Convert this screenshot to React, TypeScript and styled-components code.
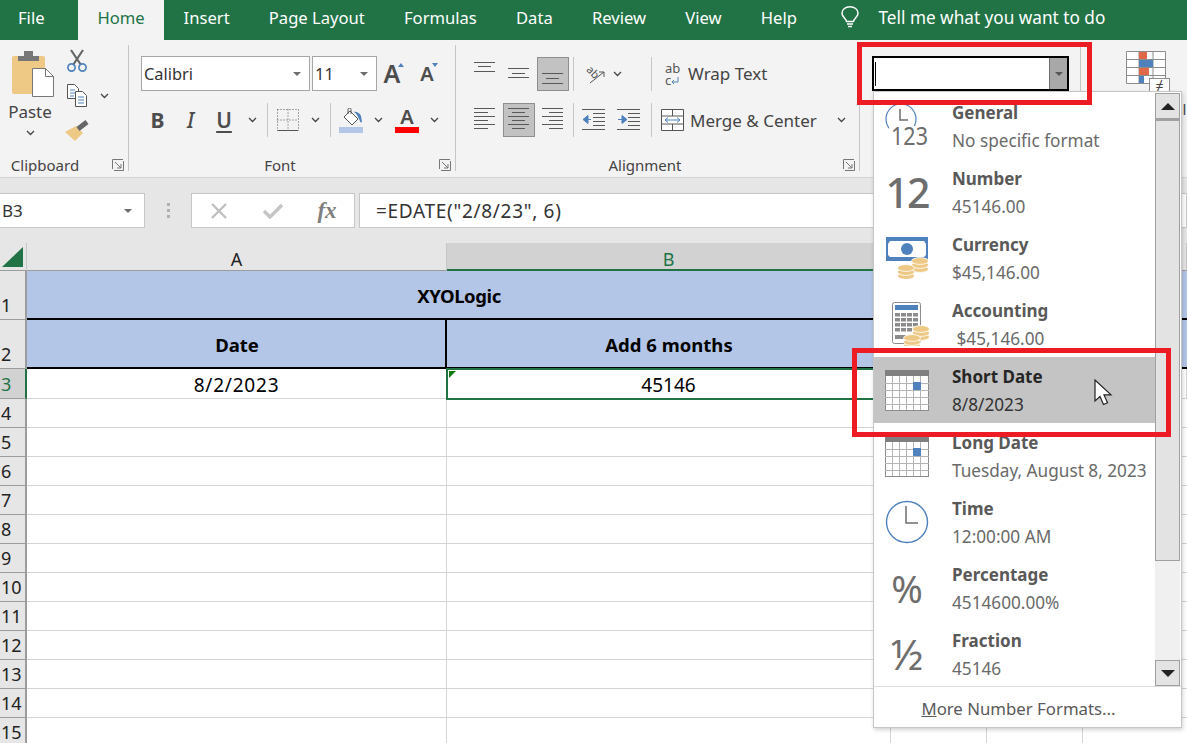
import React from 'react';
import styled, { createGlobalStyle } from 'styled-components';

const GREEN = '#217346';
const BLUE = '#4f81bd';
const CREAM = '#eec986';
const UI_FONT = '"Noto Sans", "Open Sans", sans-serif';

const GlobalStyle = createGlobalStyle`
  html, body {
    margin: 0;
    padding: 0;
    background: #fff;
    font-family: ${UI_FONT};
  }
  * { box-sizing: border-box; }
`;

const Page = styled.div`
  position: relative;
  width: 1187px;
  height: 743px;
  overflow: hidden;
  display: flex;
  flex-direction: column;
`;

/* tabs */
const TabBar = styled.div`
  display: flex;
  align-items: center;
  flex: 0 0 40px;
  background: ${GREEN};
  color: #fff;
  font-size: 16.6px;
`;

const Tab = styled.div<{ $active?: boolean; $w?: number }>`
  height: 40px;
  display: flex;
  align-items: center;
  justify-content: center;
  flex: ${(p) => (p.$w ? `0 0 ${p.$w}px` : '0 0 auto')};
  padding: ${(p) => (p.$w ? '0 0 6px' : '0 19.6px 6px')};
  background: ${(p) => (p.$active ? '#f3f3f3' : 'transparent')};
  color: ${(p) => (p.$active ? GREEN : '#fff')};
`;

const FileTab = styled(Tab)`
  justify-content: flex-start;
  padding-left: 18px;
`;

const TellMe = styled.div`
  display: flex;
  align-items: center;
  gap: 19px;
  margin-left: 23px;
  padding-bottom: 6px;
  font-size: 17.2px;
`;

/* ribbon */
const Ribbon = styled.div`
  display: flex;
  flex: 0 0 138px;
  background: #f3f3f3;
  border-bottom: 1px solid #d2d2d2;
  color: #444;
`;

const Group = styled.div<{ $w: number; $top?: number }>`
  position: relative;
  display: flex;
  flex-direction: column;
  flex: 0 0 ${(p) => p.$w}px;
  padding-top: ${(p) => p.$top ?? 16}px;
  &::after {
    content: '';
    position: absolute;
    top: 5px;
    bottom: 6px;
    right: 0;
    width: 1px;
    background: #c6c6c6;
  }
`;

const GroupBody = styled.div`
  display: flex;
  flex-direction: column;
  gap: 12px;
  flex: 1;
`;

const ToolRow = styled.div<{ $h?: number; $pad?: number }>`
  display: flex;
  align-items: center;
  height: ${(p) => p.$h ?? 34}px;
  padding-left: ${(p) => p.$pad ?? 0}px;
`;

const Tool = styled.div<{ $w: number; $on?: boolean; $ml?: number }>`
  position: relative;
  flex: 0 0 ${(p) => p.$w}px;
  height: 34px;
  margin-left: ${(p) => p.$ml ?? 0}px;
  display: flex;
  align-items: center;
  justify-content: center;
  background: ${(p) => (p.$on ? '#c2c2c2' : 'transparent')};
  border: ${(p) => (p.$on ? '1px solid #8e8e8e' : '0')};
`;

const RowSep = styled.div<{ $w: number; $ml?: number }>`
  flex: 0 0 ${(p) => p.$w}px;
  height: 34px;
  margin-left: ${(p) => p.$ml ?? 0}px;
  display: flex;
  justify-content: center;
  &::before {
    content: '';
    width: 1px;
    background: #c6c6c6;
  }
`;

const Footer = styled.div`
  display: flex;
  align-items: center;
  height: 20px;
  padding-right: 5px;
  margin-bottom: 2px;
`;

const GroupLabel = styled.div<{ $w: number }>`
  width: ${(p) => p.$w}px;
  text-align: center;
  font-size: 15px;
  line-height: 20px;
  color: #444;
`;

const LauncherBox = styled.div`
  margin-left: auto;
  width: 12px;
  height: 12px;
  display: flex;
`;

const ClipRow = styled.div`
  display: flex;
  flex: 1;
`;

const PasteColumn = styled.div`
  flex: 0 0 60px;
  display: flex;
  flex-direction: column;
  align-items: center;
  padding-top: 8px;
`;

const PasteIcon = styled.svg`
  margin-left: 6px;
`;

const PasteLabel = styled.div`
  font-size: 17px;
  line-height: 22px;
  margin: 4px 0 7px;
`;

const SmallColumn = styled.div`
  display: flex;
  flex-direction: column;
`;

const SmallRow = styled.div`
  display: flex;
  align-items: center;
  height: 35px;
`;

const SmallTool = styled.div<{ $w: number }>`
  flex: 0 0 ${(p) => p.$w}px;
  display: flex;
  align-items: center;
  justify-content: center;
`;

const Combo = styled.div<{ $w: number; $ml?: number }>`
  flex: 0 0 ${(p) => p.$w}px;
  height: 35px;
  margin-left: ${(p) => p.$ml ?? 0}px;
  display: flex;
  align-items: center;
  justify-content: space-between;
  padding: 0 8px 0 2px;
  background: #fff;
  border: 1px solid #a6a6a6;
  font-size: 16.4px;
  color: #333;
`;

const Arrow = styled.span<{ $color?: string }>`
  width: 0;
  height: 0;
  border-left: 4px solid transparent;
  border-right: 4px solid transparent;
  border-top: 4px solid ${(p) => p.$color ?? '#6d6d6d'};
`;

const FontLetter = styled.span<{ $size: number; $weight?: number; $italic?: boolean; $under?: boolean }>`
  font-size: ${(p) => p.$size}px;
  font-weight: ${(p) => p.$weight ?? 700};
  font-style: ${(p) => (p.$italic ? 'italic' : 'normal')};
  text-decoration: ${(p) => (p.$under ? 'underline' : 'none')};
  text-underline-offset: 3px;
  color: #4d4d4d;
  line-height: 1;
`;

const SizeCaret = styled.span<{ $left: number }>`
  position: absolute;
  top: 6px;
  left: ${(p) => p.$left}px;
  width: 0;
  height: 0;
  border-left: 3.5px solid transparent;
  border-right: 3.5px solid transparent;
  border-bottom: 4px solid ${BLUE};
`;

const SizeCaretDown = styled(SizeCaret)`
  border-bottom: 0;
  border-top: 4px solid ${BLUE};
`;

const ColorLetter = styled.div`
  display: flex;
  flex-direction: column;
  align-items: center;
  width: 24px;
  line-height: 1;
`;

const ColorBar = styled.div<{ $c: string }>`
  width: 24px;
  height: 6px;
  background: ${(p) => p.$c};
`;

const ActionButton = styled.div<{ $ml: number }>`
  display: flex;
  align-items: center;
  gap: 6px;
  margin-left: ${(p) => p.$ml}px;
  font-size: 17px;
  color: #444;
`;

const WrapGlyph = styled.div`
  display: flex;
  flex-direction: column;
  width: 17px;
  font-size: 13px;
  line-height: 12px;
  color: #555;
`;

const MergeChevron = styled.span`
  display: flex;
  margin-left: 14px;
`;

const NumberBox = styled.div`
  width: 197px;
  height: 35px;
  margin-left: 12px;
  display: flex;
  background: #fff;
  border: 2px solid #000;
`;

const NumberInput = styled.div`
  flex: 1;
  display: flex;
  align-items: center;
  padding-left: 1px;
  &::before {
    content: '';
    width: 1px;
    height: 24px;
    background: #000;
  }
`;

const NumberDrop = styled.div`
  flex: 0 0 18px;
  display: flex;
  align-items: center;
  justify-content: center;
  background: #a8a8a8;
  border-left: 1px solid #6d6d6d;
`;

const StylesColumn = styled.div`
  display: flex;
  flex-direction: column;
  align-items: center;
  width: 100px;
  margin-left: 24px;
  padding-top: 11px;
`;

const StylesIconBox = styled.div`
  position: relative;
  width: 40px;
  height: 42px;
`;

const NotEqual = styled.div`
  position: absolute;
  left: 23px;
  top: 27px;
  width: 21px;
  height: 16px;
  background: #fff;
  border: 1px solid #8c8c8c;
  font-size: 14px;
  line-height: 14px;
  text-align: center;
  color: #444;
`;

const StylesLabel = styled.div`
  font-size: 15px;
  line-height: 18px;
  margin-top: 7px;
`;

/* formula bar */
const FormulaBand = styled.div`
  display: flex;
  align-items: flex-start;
  flex: 0 0 65px;
  padding-top: 15px;
  background: #e6e6e6;
`;

const NameBox = styled.div`
  flex: 0 0 146px;
  height: 35px;
  margin-left: -1px;
  display: flex;
  align-items: center;
  justify-content: space-between;
  padding: 0 12px 0 2px;
  background: #fff;
  border: 1px solid #c6c6c6;
  font-size: 17px;
  color: #333;
`;

const GripDots = styled.div`
  flex: 0 0 46px;
  height: 35px;
  display: flex;
  flex-direction: column;
  align-items: center;
  justify-content: center;
  gap: 3px;
`;

const GripDot = styled.span`
  width: 3px;
  height: 3px;
  background: #b0b0b0;
`;

const FormulaTools = styled.div`
  flex: 0 0 164px;
  height: 35px;
  display: flex;
  align-items: center;
  background: #fff;
  border: 1px solid #c6c6c6;
`;

const FormulaTool = styled.div`
  flex: 0 0 54px;
  display: flex;
  justify-content: center;
`;

const FxLabel = styled.span`
  font-family: "Liberation Serif", serif;
  font-style: italic;
  font-weight: 700;
  font-size: 23px;
  color: #7f7f7f;
`;

const FormulaInput = styled.div`
  flex: 1;
  height: 35px;
  margin-left: 4px;
  padding-left: 16px;
  display: flex;
  align-items: center;
  background: #fff;
  border: 1px solid #c6c6c6;
  font-size: 19px;
  letter-spacing: 0.7px;
  color: #333;
`;

/* sheet */
const Sheet = styled.div`
  flex: 1;
  display: grid;
  grid-template-columns: 27px 420px 444px 96px 96px 104px;
  grid-template-rows: 28px 49px 49px 30px repeat(12, 29px);
  background: #fff;
`;

const Corner = styled.div`
  background: #e6e6e6;
  border-right: 1px solid #c6c6c6;
  border-bottom: 1px solid #9c9c9c;
  display: flex;
  align-items: flex-end;
  padding: 0 0 3px 2px;
`;

const ColHead = styled.div<{ $sel?: boolean }>`
  display: flex;
  align-items: center;
  justify-content: center;
  padding-top: 5px;
  background: ${(p) => (p.$sel ? '#d2d2d2' : '#e6e6e6')};
  border-right: 1px solid #c6c6c6;
  border-bottom: ${(p) => (p.$sel ? `2px solid ${GREEN}` : '1px solid #9c9c9c')};
  color: ${(p) => (p.$sel ? GREEN : '#222')};
  font-size: 18px;
`;

const RowHead = styled.div<{ $sel?: boolean }>`
  display: flex;
  align-items: flex-end;
  padding: 0 0 3px 1px;
  background: ${(p) => (p.$sel ? '#d2d2d2' : '#e6e6e6')};
  border-right: ${(p) => (p.$sel ? `2px solid ${GREEN}` : '2px solid #9c9c9c')};
  border-bottom: 1px solid #9c9c9c;
  color: ${(p) => (p.$sel ? GREEN : '#222')};
  font-size: 18px;
  line-height: 22px;
`;

const Cell = styled.div<{
  $blue?: boolean;
  $span?: number;
  $bold?: boolean;
  $heavy?: boolean;
  $heavyLeft?: boolean;
  $noRight?: boolean;
  $track?: number;
}>`
  position: relative;
  display: flex;
  align-items: center;
  justify-content: center;
  padding-top: 2px;
  grid-column: span ${(p) => p.$span ?? 1};
  background: ${(p) => (p.$blue ? '#b4c6e7' : '#fff')};
  border-right: ${(p) => (p.$noRight || p.$blue ? '0' : '1px solid #d4d4d4')};
  border-bottom: ${(p) => (p.$heavy ? '2px solid #000' : '1px solid #d4d4d4')};
  box-shadow: ${(p) => (p.$heavyLeft ? '-2px 0 0 #000' : 'none')};
  font-weight: ${(p) => (p.$bold ? 700 : 400)};
  font-size: ${(p) => (p.$bold ? 18.5 : 19)}px;
  letter-spacing: ${(p) => p.$track ?? 0}px;
  color: #000;
`;

const SelectedCell = styled(Cell)`
  z-index: 1;
  outline: 2px solid ${GREEN};
  outline-offset: -1px;
  &::before {
    content: '';
    position: absolute;
    left: 2px;
    top: 2px;
    border-top: 7px solid #107c10;
    border-right: 7px solid transparent;
  }
`;

/* number format menu */
const FormatMenu = styled.div`
  position: absolute;
  left: 873px;
  top: 91px;
  width: 309px;
  height: 637px;
  z-index: 5;
  display: flex;
  flex-direction: column;
  background: #fff;
  border: 1px solid #c6c6c6;
  box-shadow: 1px 2px 4px rgba(0, 0, 0, 0.18);
`;

const MenuBody = styled.div`
  display: flex;
  height: 595px;
  padding-top: 1px;
  border-bottom: 1px solid #dcdcdc;
`;

const MenuList = styled.div`
  flex: 0 0 281px;
`;

const MenuItem = styled.div<{ $hover?: boolean }>`
  display: flex;
  align-items: center;
  height: 66px;
  background: ${(p) => (p.$hover ? '#c4c4c4' : 'transparent')};
`;

const ItemIcon = styled.div`
  flex: 0 0 78px;
  padding-left: 11px;
  display: flex;
  align-items: center;
`;

const BigText = styled.span<{ $size: number; $space?: number; $weight?: number }>`
  font-size: ${(p) => p.$size}px;
  letter-spacing: ${(p) => p.$space ?? 0}px;
  font-weight: ${(p) => p.$weight ?? 400};
  line-height: 1;
  color: #6e6e6e;
  width: 44px;
  text-align: center;
`;

const ItemText = styled.div`
  display: flex;
  flex-direction: column;
  gap: 5px;
`;

const ItemTitle = styled.div<{ $hover?: boolean }>`
  font-size: 17px;
  line-height: 23px;
  font-weight: 700;
  color: ${(p) => (p.$hover ? '#262626' : '#595959')};
`;

const ItemDetail = styled.div<{ $hover?: boolean }>`
  font-size: 17.2px;
  line-height: 23px;
  white-space: pre;
  color: ${(p) => (p.$hover ? '#333' : '#6a6a6a')};
`;

const ScrollBar = styled.div`
  flex: 0 0 25px;
  display: flex;
  flex-direction: column;
`;

const ScrollButton = styled.div`
  flex: 0 0 26px;
  display: flex;
  align-items: center;
  justify-content: center;
  background: #e3e3e3;
  border: 1px solid #a0a0a0;
`;

const ScrollUp = styled.span`
  width: 0;
  height: 0;
  border-left: 7px solid transparent;
  border-right: 7px solid transparent;
  border-bottom: 7px solid #222;
`;

const ScrollDown = styled.span`
  width: 0;
  height: 0;
  border-left: 7px solid transparent;
  border-right: 7px solid transparent;
  border-top: 7px solid #222;
`;

const ScrollThumb = styled.div`
  flex: 0 0 442px;
  background: #e3e3e3;
  border: 1px solid #a0a0a0;
  border-top: 2px solid #a0a0a0;
`;

const ScrollTrack = styled.div`
  flex: 1;
  background: #f0f0f0;
`;

const MoreFormats = styled.div`
  flex: 1;
  display: flex;
  align-items: center;
  justify-content: center;
  padding: 2px 18px 0 0;
  font-size: 16.8px;
  color: #595959;
`;

const Underlined = styled.span`
  text-decoration: underline;
`;

/* annotations on top of the screenshot */
const RedBox = styled.div<{ $x: number; $y: number; $w: number; $h: number }>`
  position: absolute;
  left: ${(p) => p.$x}px;
  top: ${(p) => p.$y}px;
  width: ${(p) => p.$w}px;
  height: ${(p) => p.$h}px;
  border: 5px solid #ed1c24;
  z-index: 6;
`;

const Pointer = styled.svg`
  position: absolute;
  left: 1094px;
  top: 379px;
  z-index: 7;
`;

const Chevron = () => (
  <svg width="9" height="6" viewBox="0 0 9 6">
    <polyline points="1,1 4.5,4.5 8,1" fill="none" stroke="#444" strokeWidth="1.3" />
  </svg>
);

const Launcher = () => (
  <LauncherBox>
    <svg width="12" height="12" viewBox="0 0 12 12">
      <path d="M.5 10V.5H11M2 11.5h9.5V2M3 3l6 6M9 5v4H5" fill="none" stroke="#777" strokeWidth="1" />
    </svg>
  </LauncherBox>
);

type Line = [number, number, number];

const LineIcon = ({ lines }: { lines: Line[] }) => (
  <svg width="22" height="34" viewBox="0 0 22 34">
    {lines.map(([x, w, y]) => (
      <rect key={`${x}-${y}`} x={x} y={y} width={w} height="1" fill="#595959" />
    ))}
  </svg>
);

const stack = (xs: [number, number][]): Line[] => xs.map(([x, w], i) => [x, w, 5 + i * 4]);

const Bulb = () => (
  <svg width="20" height="22" viewBox="0 0 20 22">
    <path
      d="M6.5 15.5C6 12.5 2 11 2 7.2 2 3.2 5.6.8 10 .8s8 2.4 8 6.4c0 3.8-4 5.3-4.5 8.3zM7 18h6M8 20.5h4"
      fill="none"
      stroke="#fff"
      strokeWidth="1.5"
    />
  </svg>
);

const ScissorsIcon = () => (
  <svg width="22" height="24" viewBox="0 0 22 24">
    <path d="M5 1l10 15M17 1L7 16" stroke="#666" strokeWidth="2.2" fill="none" />
    <circle cx="5.5" cy="18.5" r="3.6" fill="none" stroke={BLUE} strokeWidth="1.7" />
    <circle cx="16.5" cy="18.5" r="3.6" fill="none" stroke={BLUE} strokeWidth="1.7" />
  </svg>
);

const CopyIcon = () => (
  <svg width="21" height="23" viewBox="0 0 21 23">
    <path d="M.5.5h7l4 4v10H.5z" fill="#fff" stroke="#555" />
    <path d="M8.5 7.5h7l4 4v11h-11z" fill="#fff" stroke="#555" />
    <path d="M3 6h5M3 9h5M3 12h4" stroke={BLUE} />
    <path d="M11 13h6M11 16h6M11 19h6" stroke={BLUE} />
  </svg>
);

const PainterIcon = () => (
  <svg width="24" height="21" viewBox="0 0 24 21">
    <path d="M0 12l11-6 7 7-8 8z" fill={CREAM} />
    <path d="M13 9l9-7" stroke="#666" strokeWidth="5" />
  </svg>
);

const BordersIcon = () => (
  <svg width="22" height="22" viewBox="0 0 22 22">
    <path
      d="M.5.5h21M.5 11h21M.5 21.5h21M.5.5v21M11 .5v21M21.5.5v21"
      stroke="#555"
      strokeDasharray="1 2"
      fill="none"
    />
    <path d="M.5 21.5h21" stroke="#555" />
  </svg>
);

const BucketIcon = () => (
  <svg width="24" height="19" viewBox="0 0 24 19">
    <path d="M11 3l8 8-6 6-8-8z" fill="#fff" stroke="#555" />
    <path d="M9 6V1.5a1.5 1.5 0 0 1 3 0V6" fill="none" stroke="#555" />
    <path d="M19 9c-1-3-3-5-5-5 3-1 7 1 8 4l1 6c-1 1-2 0-2-1z" fill={BLUE} />
  </svg>
);

const OrientationIcon = () => (
  <svg width="22" height="24" viewBox="0 0 22 24">
    <text x="3" y="13" fontSize="11" fill="#555" fontFamily={UI_FONT} transform="rotate(45 8 9)">
      ab
    </text>
    <path d="M6 21L20 10M15 10h5v5" fill="none" stroke="#555" />
  </svg>
);

const ReturnArrow = () => (
  <svg width="8" height="8" viewBox="0 0 8 8">
    <path d="M7 0v5H1M3 3L1 5l2 2" fill="none" stroke={BLUE} />
  </svg>
);

const MergeIcon = () => (
  <svg width="23" height="22" viewBox="0 0 23 22">
    <path d="M.5.5h22v21H.5zM.5 7h22M.5 15h22M11.5.5V7M11.5 15v6.5" fill="#fff" stroke="#555" />
    <path d="M4 11h15M7 8.5L4 11l3 2.5M16 8.5l3 2.5-3 2.5" fill="none" stroke={BLUE} />
  </svg>
);

const IndentIcon = ({ flip }: { flip?: boolean }) => (
  <svg width="23" height="22" viewBox="0 0 23 22">
    <path d="M0 .5h23M11 4.5h12M11 8.5h12M11 12.5h12M11 16.5h12M0 20.5h23" stroke="#595959" />
    {flip ? (
      <path d="M1 10.5h6M5 6.5l5 4-5 4z" fill={BLUE} stroke={BLUE} />
    ) : (
      <path d="M9 10.5H3M6 6.5l-5 4 5 4z" fill={BLUE} stroke={BLUE} />
    )}
  </svg>
);

const CondFormatIcon = () => (
  <svg width="40" height="33" viewBox="0 0 40 33">
    <path d="M.5.5h39v32H.5zM.5 8.5h39M.5 16.5h39M.5 24.5h39M13 .5v32M27 .5v32" fill="#fff" stroke="#8c8c8c" />
    <rect x="13" y="1" width="8" height="7" fill="#e0694a" />
    <rect x="13" y="9" width="14" height="7" fill={BLUE} />
    <rect x="13" y="17" width="10" height="7" fill="#e0694a" />
    <rect x="13" y="25" width="5" height="7" fill={BLUE} />
  </svg>
);

const CrossIcon = () => (
  <svg width="16" height="16" viewBox="0 0 16 16">
    <path d="M1 1l14 14M15 1L1 15" stroke="#c0c0c0" strokeWidth="2.4" />
  </svg>
);

const CheckIcon = () => (
  <svg width="20" height="16" viewBox="0 0 20 16">
    <path d="M1 8l6 6L19 2" fill="none" stroke="#c4c4c4" strokeWidth="3.4" />
  </svg>
);

const SelectAll = () => (
  <svg width="21" height="20" viewBox="0 0 21 20">
    <path d="M21 0v20H0z" fill={GREEN} />
  </svg>
);

const GeneralIcon = () => (
  <svg width="44" height="44" viewBox="0 0 44 44">
    <circle cx="16" cy="15" r="15" fill="none" stroke={BLUE} strokeWidth="1.2" />
    <path d="M15 5v11h8" fill="none" stroke="#6e6e6e" strokeWidth="1.5" />
    <rect x="4" y="22" width="40" height="22" fill="#fff" />
    <text x="6" y="41" fontSize="26" fill="#6e6e6e" fontFamily={UI_FONT} textLength="37" lengthAdjust="spacingAndGlyphs">
      123
    </text>
  </svg>
);

const Coins = ({ x, y }: { x: number; y: number }) => (
  <g fill={CREAM} stroke="#fff" strokeWidth="0.8">
    {[8, 4, 0].map((d) => (
      <ellipse key={d} cx={x} cy={y + d} rx="8.5" ry="3.4" />
    ))}
  </g>
);

const CurrencyIcon = () => (
  <svg width="44" height="42" viewBox="0 0 44 42">
    <path d="M1 0h42v24H1z" fill={BLUE} />
    <path d="M5 4h34l2 3v11l-2 2H5l-2-2V7z" fill="#fff" />
    <circle cx="22" cy="12" r="6" fill={BLUE} />
    <Coins x={35} y={24} />
    <Coins x={21} y={31} />
  </svg>
);

const AccountingIcon = () => (
  <svg width="44" height="44" viewBox="0 0 44 44">
    <rect x="7.5" y="0.5" width="28" height="41" rx="2" fill="#fff" stroke="#8c8c8c" />
    <rect x="10" y="3" width="23" height="5" fill={BLUE} />
    {[11, 16, 21, 26].flatMap((y) =>
      [10, 16, 22, 28].map((x) => <rect key={`${x}-${y}`} x={x} y={y} width="5" height="3.5" fill="#8c8c8c" />),
    )}
    <rect x="10" y="33" width="11" height="4" fill="#8c8c8c" />
    <Coins x={36} y={27} />
    <Coins x={27} y={36} />
  </svg>
);

const CalendarIcon = () => (
  <svg width="44" height="41" viewBox="0 0 44 41">
    <rect x="0.5" y="0.5" width="43" height="40" fill="#fff" stroke="#8c8c8c" />
    <rect x="0" y="0" width="44" height="6" fill="#7f7f7f" />
    <path d="M7.5 6v34M14.5 6v34M21.5 6v34M28.5 6v34M35.5 6v34M0 13.5h44M0 20.5h44M0 27.5h44M0 34.5h44" stroke="#b4b4b4" />
    <rect x="28" y="12" width="8" height="8" fill={BLUE} />
  </svg>
);

const ClockIcon = () => (
  <svg width="44" height="44" viewBox="0 0 44 44">
    <circle cx="22" cy="22" r="20.5" fill="none" stroke={BLUE} strokeWidth="1.4" />
    <path d="M21 6v17h12" fill="none" stroke="#6e6e6e" strokeWidth="1.5" />
  </svg>
);

const formats = [
  { title: 'General', detail: 'No specific format', icon: <GeneralIcon /> },
  { title: 'Number', detail: '45146.00', icon: <BigText $size={41} $space={-2} $weight={500}>12</BigText> },
  { title: 'Currency', detail: '$45,146.00', icon: <CurrencyIcon /> },
  { title: 'Accounting', detail: ' $45,146.00', icon: <AccountingIcon /> },
  { title: 'Short Date', detail: '8/8/2023', icon: <CalendarIcon />, hover: true },
  { title: 'Long Date', detail: 'Tuesday, August 8, 2023', icon: <CalendarIcon /> },
  { title: 'Time', detail: '12:00:00 AM', icon: <ClockIcon /> },
  { title: 'Percentage', detail: '4514600.00%', icon: <BigText $size={38}>%</BigText> },
  { title: 'Fraction', detail: '45146', icon: <BigText $size={42}>½</BigText> },
];

const tabs = ['Insert', 'Page Layout', 'Formulas', 'Data', 'Review', 'View', 'Help'];
const blankRows = [4, 5, 6, 7, 8, 9, 10, 11, 12, 13, 14, 15];

const App: React.FC = () => {
  return (
    <Page>
      <GlobalStyle />
      <TabBar>
        <FileTab $w={78}>File</FileTab>
        <Tab $w={86} $active>Home</Tab>
        {tabs.map((t) => (
          <Tab key={t}>{t}</Tab>
        ))}
        <TellMe>
          <Bulb />
          <span>Tell me what you want to do</span>
        </TellMe>
      </TabBar>

      <Ribbon>
        <Group $w={129} $top={3}>
          <ClipRow>
            <PasteColumn>
              <PasteIcon width="42" height="46" viewBox="0 0 42 46">
                <rect x="0" y="5" width="33" height="38" rx="2" fill={CREAM} />
                <path d="M6 5h6V0h9v5h6v5H6z" fill="#777" />
                <path d="M20.5 17.5h13l8 8v20h-21z" fill="#fff" stroke="#777" />
                <path d="M33.5 17.5v8h8" fill="none" stroke="#777" />
              </PasteIcon>
              <PasteLabel>Paste</PasteLabel>
              <Chevron />
            </PasteColumn>
            <SmallColumn>
              <SmallRow>
                <SmallTool $w={34}><ScissorsIcon /></SmallTool>
              </SmallRow>
              <SmallRow>
                <SmallTool $w={34}><CopyIcon /></SmallTool>
                <SmallTool $w={20}><Chevron /></SmallTool>
              </SmallRow>
              <SmallRow>
                <SmallTool $w={34}><PainterIcon /></SmallTool>
              </SmallRow>
            </SmallColumn>
          </ClipRow>
          <Footer>
            <GroupLabel $w={90}>Clipboard</GroupLabel>
            <Launcher />
          </Footer>
        </Group>

        <Group $w={327}>
          <GroupBody>
            <ToolRow $h={35} $pad={12}>
              <Combo $w={169}>Calibri<Arrow /></Combo>
              <Combo $w={65} $ml={2}>11<Arrow /></Combo>
              <Tool $w={26} $ml={2}>
                <FontLetter $size={25} $weight={600}>A</FontLetter>
                <SizeCaret $left={19} />
              </Tool>
              <Tool $w={34} $ml={5}>
                <FontLetter $size={20} $weight={600}>A</FontLetter>
                <SizeCaretDown $left={22} />
              </Tool>
            </ToolRow>
            <ToolRow $pad={12}>
              <Tool $w={33}><FontLetter $size={21}>B</FontLetter></Tool>
              <Tool $w={33}><FontLetter $size={21} $italic $weight={500}>I</FontLetter></Tool>
              <Tool $w={34}><FontLetter $size={21} $under $weight={600}>U</FontLetter></Tool>
              <Tool $w={22}><Chevron /></Tool>
              <RowSep $w={8} />
              <Tool $w={33}><BordersIcon /></Tool>
              <Tool $w={22}><Chevron /></Tool>
              <RowSep $w={8} />
              <Tool $w={33}>
                <ColorLetter>
                  <BucketIcon />
                  <ColorBar $c="#b4c6e7" />
                </ColorLetter>
              </Tool>
              <Tool $w={22}><Chevron /></Tool>
              <Tool $w={36}>
                <ColorLetter>
                  <FontLetter $size={20} $weight={600}>A</FontLetter>
                  <ColorBar $c="#ff0000" />
                </ColorLetter>
              </Tool>
              <Tool $w={18}><Chevron /></Tool>
            </ToolRow>
          </GroupBody>
          <Footer>
            <GroupLabel $w={302}>Font</GroupLabel>
            <Launcher />
          </Footer>
        </Group>

        <Group $w={404}>
          <GroupBody>
            <ToolRow $h={35} $pad={12}>
              <Tool $w={33}><LineIcon lines={[[0, 21, 5], [4, 13, 9], [0, 21, 14]]} /></Tool>
              <Tool $w={34}><LineIcon lines={[[1, 21, 11], [5, 13, 16], [1, 21, 20]]} /></Tool>
              <Tool $w={32} $ml={2} $on><LineIcon lines={[[0, 21, 16], [4, 13, 21], [0, 21, 26]]} /></Tool>
              <RowSep $w={9} />
              <Tool $w={33}><OrientationIcon /></Tool>
              <Tool $w={12}><Chevron /></Tool>
              <RowSep $w={8} $ml={24} />
              <ActionButton $ml={10}>
                <WrapGlyph>
                  <span>ab</span>
                  <span>c<ReturnArrow /></span>
                </WrapGlyph>
                <span>Wrap Text</span>
              </ActionButton>
            </ToolRow>
            <ToolRow $pad={12}>
              <Tool $w={33}><LineIcon lines={stack([[0, 21], [0, 14], [0, 21], [0, 14], [0, 21], [0, 14]])} /></Tool>
              <Tool $w={32} $ml={2} $on><LineIcon lines={stack([[0, 21], [4, 13], [0, 21], [4, 13], [0, 21], [4, 13]])} /></Tool>
              <Tool $w={32} $ml={2}><LineIcon lines={stack([[0, 21], [7, 14], [0, 21], [7, 14], [0, 21], [7, 14]])} /></Tool>
              <RowSep $w={9} />
              <Tool $w={31}><IndentIcon /></Tool>
              <Tool $w={38}><IndentIcon flip /></Tool>
              <RowSep $w={8} />
              <ActionButton $ml={6}>
                <MergeIcon />
                <span>Merge &amp; Center</span>
                <MergeChevron><Chevron /></MergeChevron>
              </ActionButton>
            </ToolRow>
          </GroupBody>
          <Footer>
            <GroupLabel $w={378}>Alignment</GroupLabel>
            <Launcher />
          </Footer>
        </Group>

        <Group $w={221}>
          <NumberBox>
            <NumberInput />
            <NumberDrop><Arrow $color="#555" /></NumberDrop>
          </NumberBox>
        </Group>

        <StylesColumn>
          <StylesIconBox>
            <CondFormatIcon />
            <NotEqual>≠</NotEqual>
          </StylesIconBox>
          <StylesLabel>Conditional</StylesLabel>
        </StylesColumn>
      </Ribbon>

      <FormulaBand>
        <NameBox>B3<Arrow /></NameBox>
        <GripDots>
          <GripDot />
          <GripDot />
          <GripDot />
        </GripDots>
        <FormulaTools>
          <FormulaTool><CrossIcon /></FormulaTool>
          <FormulaTool><CheckIcon /></FormulaTool>
          <FormulaTool><FxLabel>fx</FxLabel></FormulaTool>
        </FormulaTools>
        <FormulaInput>=EDATE("2/8/23", 6)</FormulaInput>
      </FormulaBand>

      <Sheet>
        <Corner><SelectAll /></Corner>
        <ColHead>A</ColHead>
        <ColHead $sel>B</ColHead>
        <ColHead />
        <ColHead />
        <ColHead />

        <RowHead>1</RowHead>
        <Cell $blue $span={2} $bold $heavy $track={-0.4}>XYOLogic</Cell>
        <Cell $blue $heavy />
        <Cell $blue $heavy />
        <Cell $blue $heavy />

        <RowHead>2</RowHead>
        <Cell $blue $bold $heavy>Date</Cell>
        <Cell $blue $bold $heavy $heavyLeft>Add 6 months</Cell>
        <Cell $blue $heavy />
        <Cell $blue $heavy />
        <Cell $blue $heavy />

        <RowHead $sel>3</RowHead>
        <Cell $track={0.8}>8/2/2023</Cell>
        <SelectedCell>45146</SelectedCell>
        <Cell />
        <Cell />
        <Cell />

        {blankRows.map((n) => (
          <React.Fragment key={n}>
            <RowHead>{n}</RowHead>
            <Cell />
            <Cell />
            <Cell />
            <Cell />
            <Cell $noRight />
          </React.Fragment>
        ))}
      </Sheet>

      <FormatMenu>
        <MenuBody>
          <MenuList>
            {formats.map((f) => (
              <MenuItem key={f.title} $hover={f.hover}>
                <ItemIcon>{f.icon}</ItemIcon>
                <ItemText>
                  <ItemTitle $hover={f.hover}>{f.title}</ItemTitle>
                  <ItemDetail $hover={f.hover}>{f.detail}</ItemDetail>
                </ItemText>
              </MenuItem>
            ))}
          </MenuList>
          <ScrollBar>
            <ScrollButton><ScrollUp /></ScrollButton>
            <ScrollThumb />
            <ScrollTrack />
            <ScrollButton><ScrollDown /></ScrollButton>
          </ScrollBar>
        </MenuBody>
        <MoreFormats>
          <span><Underlined>M</Underlined>ore Number Formats...</span>
        </MoreFormats>
      </FormatMenu>

      <RedBox $x={857} $y={42} $w={235} $h={63} />
      <RedBox $x={852} $y={348} $w={319} $h={89} />

      <Pointer width="19" height="28" viewBox="0 0 19 28">
        <path d="M1 1v21l5-4.5 3.5 8 4-1.8-3.5-7.8H17z" fill="#fff" stroke="#222" strokeWidth="1.2" />
      </Pointer>
    </Page>
  );
};

export default App;
